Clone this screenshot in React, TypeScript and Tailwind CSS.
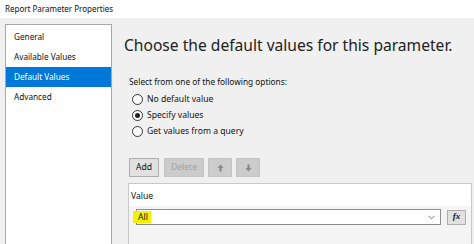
import React from 'react';

const navItems = ['General', 'Available Values', 'Default Values', 'Advanced'];

const options = [
  { label: 'No default value', checked: false },
  { label: 'Specify values', checked: true },
  { label: 'Get values from a query', checked: false },
];

const Radio: React.FC<{ checked: boolean; label: string }> = ({ checked, label }) => (
  <div className="flex h-[16px] items-center">
    <span className="ml-[3px] flex h-[11px] w-[11px] items-center justify-center rounded-full border border-[#333333] bg-white">
      {checked && <span className="h-[5px] w-[5px] rounded-full bg-[#222222]" />}
    </span>
    <span className="ml-[4px] text-[8.6px] text-[#111111]">{label}</span>
  </div>
);

const Arrow: React.FC<{ up?: boolean }> = ({ up }) => (
  <svg width="7" height="8" viewBox="0 0 7 8" className={up ? '' : 'rotate-180'}>
    <path d="M3.5 0.5 L6.5 4 L4.6 4 L4.6 7.5 L2.4 7.5 L2.4 4 L0.5 4 Z" fill="#8a8a8a" />
  </svg>
);

export default function App() {
  return (
    <div
      className="flex h-[244px] w-[474px] flex-col overflow-hidden bg-[#f0f0f0]"
      style={{ fontFamily: '"Noto Sans", "Open Sans", sans-serif' }}
    >
      <div className="flex h-[18px] items-center bg-white pl-[5px] text-[8px] text-[#111111]">
        Report Parameter Properties
      </div>
      <div className="flex flex-1">
        <nav className="ml-[5px] mt-[6px] w-[107px] border border-b-0 border-[#a8a8a8] bg-white pt-[2px]">
          {navItems.map((item) => (
            <div
              key={item}
              className={`flex h-[20px] items-center pl-[8px] pt-[1px] text-[8.2px] ${
                item === 'Default Values' ? 'bg-[#0078d7] text-white' : 'text-[#111111]'
              }`}
            >
              {item}
            </div>
          ))}
        </nav>
        <main className="flex flex-1 flex-col pl-[12px]">
          <h1 className="mt-[18px] flex h-[20px] items-center text-[15.6px] text-[#222222]">
            Choose the default values for this parameter.
          </h1>
          <div className="ml-[5px] mt-[18px] flex h-[16px] items-center text-[8.3px] text-[#111111]">
            Select from one of the following options:
          </div>
          <div className="ml-[5px] mt-[1px] flex flex-col">
            {options.map((o) => (
              <Radio key={o.label} checked={o.checked} label={o.label} />
            ))}
          </div>
          <div className="ml-[5px] mt-[19px] flex h-[19px] gap-[4px]">
            <button className="mr-[1px] flex w-[30px] items-center justify-center border border-[#adadad] bg-[#e1e1e1] text-[8.6px] text-[#111111]">
              Add
            </button>
            <button className="flex w-[40px] items-center justify-center border border-[#c4c4c4] bg-[#cccccc] text-[8.6px] text-[#a2a2a2]">
              Delete
            </button>
            <button className="flex w-[24px] items-center justify-center border border-[#c4c4c4] bg-[#cccccc]">
              <Arrow up />
            </button>
            <button className="flex w-[24px] items-center justify-center border border-[#c4c4c4] bg-[#cccccc]">
              <Arrow />
            </button>
          </div>
          <div className="ml-[4px] mr-[2px] mt-[6px] flex flex-1 flex-col border border-b-0 border-[#c8c8c8] bg-[#f4f4f4]">
            <div className="flex h-[22px] items-center bg-white pl-[2px] pt-[2px] text-[8.6px] text-[#111111]">Value</div>
            <div className="mt-[3px] flex items-center">
              <div className="relative ml-[7px] flex h-[16px] w-[305px] items-center border border-[#8c8c8c] bg-white">
                <span className="absolute left-[-4px] top-[1px] flex h-[12px] items-center bg-[#f2f200] pl-[5px] pr-[3px] text-[8.6px] text-[#111111]">
                  All
                </span>
                <svg width="7" height="5" viewBox="0 0 7 5" className="ml-auto mr-[5px]">
                  <path d="M0.5 0.8 L3.5 3.8 L6.5 0.8" fill="none" stroke="#7a7a7a" strokeWidth="1" />
                </svg>
              </div>
              <button className="ml-[6px] flex h-[15px] w-[19px] items-center justify-center border border-[#adadad] bg-[#e1e1e1] text-[9px] font-bold italic text-[#111111] [font-family:'Liberation_Serif',serif]">
                fx
              </button>
            </div>
          </div>
        </main>
      </div>
    </div>
  );
}
